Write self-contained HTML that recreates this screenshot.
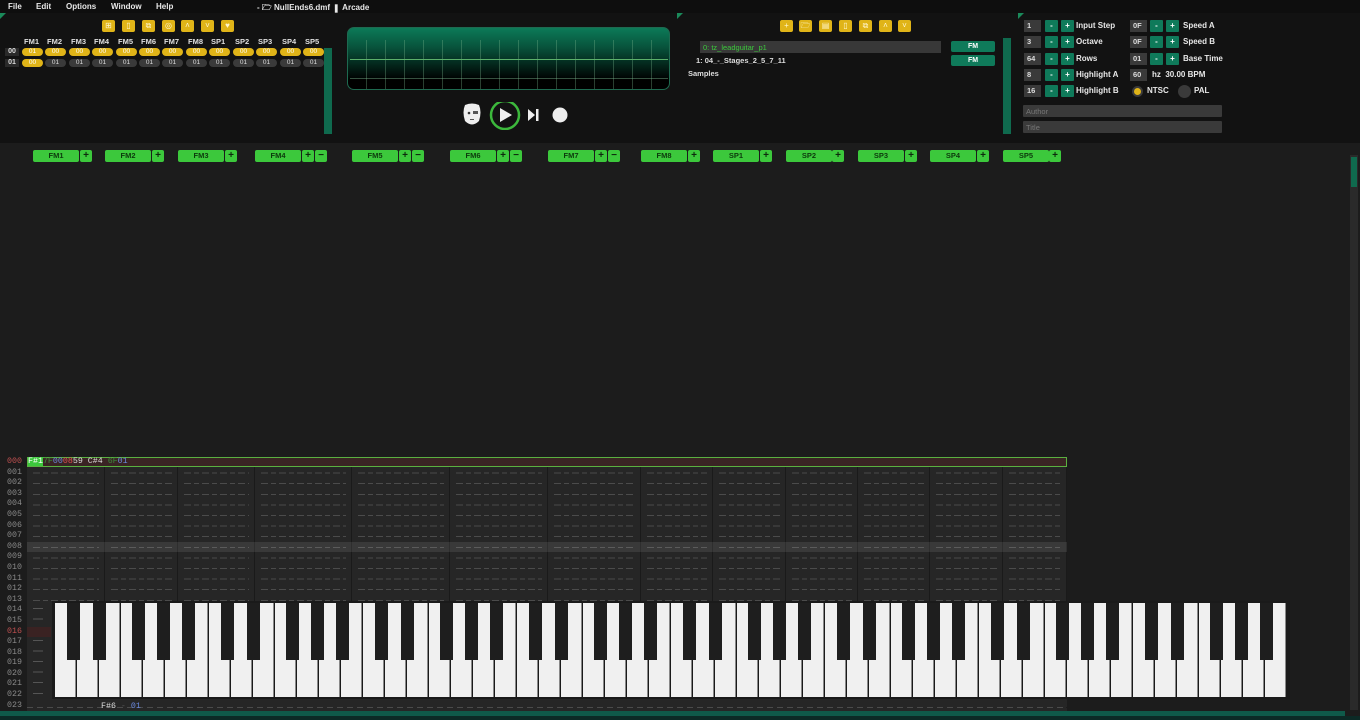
<!DOCTYPE html>
<html><head><meta charset="utf-8"><style>
*{margin:0;padding:0;box-sizing:border-box}
body{width:1360px;height:720px;overflow:hidden;background:#1c1c1c;font-family:"Liberation Sans",sans-serif;color:#ddd;position:relative}
.a{position:absolute}
.menu{left:0;top:0;width:1360px;height:13px;background:#0e0e0e;font-size:8px;font-weight:bold;color:#e8e8e8}
.menu span{position:absolute;top:2px}
.top{left:0;top:13px;width:1360px;height:130px;background:#121212}
.yb{position:absolute;width:13px;height:12px;background:#e0b418;border-radius:2px;color:#fff6cc;font-size:8px;text-align:center;line-height:12px}
.hd{position:absolute;top:37px;font-size:7.5px;font-weight:bold;color:#e0e0e0}
.pill{position:absolute;width:21px;height:8px;border-radius:4px;font-size:6.5px;text-align:center;line-height:8px}
.py{background:#e0b418;color:#fff}
.pg{background:#3a3a3a;color:#ddd}
.rl{position:absolute;font-size:7px;font-weight:bold;color:#ddd;background:#2a2a2a;width:14px;height:8px;line-height:8px;text-align:center}
.vb{position:absolute;width:17px;height:12px;background:#3a3a3a;font-size:7.5px;font-weight:bold;color:#ddd;line-height:12px;padding-left:3px}
.tb{position:absolute;width:13px;height:12px;background:#0f7a5a;font-size:8px;font-weight:bold;color:#fff;text-align:center;line-height:11px;border-radius:1px}
.lb{position:absolute;font-size:8px;font-weight:bold;color:#e8e8e8}
.ch{position:absolute;top:150px;height:12px;background:#3cc83c;border-radius:2px;font-size:7.5px;font-weight:bold;color:#0d3a0d;text-align:center;line-height:12px}
.pm{position:absolute;top:150px;width:12px;height:12px;background:#3cc83c;border-radius:2px;font-size:10px;font-weight:bold;color:#0d2a0d;text-align:center;line-height:11px}
.col{position:absolute;top:457px;height:146px;background:#262626;border-right:1px solid #1a1a1a}
.rn{left:7px;top:457px;font-family:"Liberation Mono",monospace;font-size:8.3px;line-height:10.6px;color:#8a8a8a;white-space:pre}
.mono{font-family:"Liberation Mono",monospace;font-size:8.3px}
</style></head><body>
<div class="a menu"><span style="left:8px">File</span><span style="left:36px">Edit</span><span style="left:66px">Options</span><span style="left:111px">Window</span><span style="left:156px">Help</span><span style="left:257px">- 🗁 NullEnds6.dmf ▮ Arcade</span></div>
<div class="a top"></div>
<div class="a" style="left:0;top:13px;width:0;height:0;border-top:6px solid #1a8a5a;border-right:6px solid transparent"></div>
<div class="a" style="left:677px;top:13px;width:0;height:0;border-top:6px solid #1a8a5a;border-right:6px solid transparent"></div>
<div class="a" style="left:1018px;top:13px;width:0;height:0;border-top:6px solid #1a8a5a;border-right:6px solid transparent"></div>

<div class="yb" style="left:102px;top:20px">⊞</div><div class="yb" style="left:122px;top:20px">▯</div><div class="yb" style="left:142px;top:20px">⧉</div><div class="yb" style="left:162px;top:20px">◎</div><div class="yb" style="left:181px;top:20px">˄</div><div class="yb" style="left:201px;top:20px">˅</div><div class="yb" style="left:221px;top:20px">♥</div>
<div class="hd" style="left:24px">FM1</div><div class="hd" style="left:47px">FM2</div><div class="hd" style="left:71px">FM3</div><div class="hd" style="left:94px">FM4</div><div class="hd" style="left:118px">FM5</div><div class="hd" style="left:141px">FM6</div><div class="hd" style="left:164px">FM7</div><div class="hd" style="left:188px">FM8</div><div class="hd" style="left:211px">SP1</div><div class="hd" style="left:235px">SP2</div><div class="hd" style="left:258px">SP3</div><div class="hd" style="left:282px">SP4</div><div class="hd" style="left:305px">SP5</div>
<div class="rl" style="left:5px;top:48px">00</div><div class="rl" style="left:5px;top:59px">01</div>
<div class="pill py" style="left:22px;top:48px">01</div><div class="pill py" style="left:45px;top:48px">00</div><div class="pill py" style="left:69px;top:48px">00</div><div class="pill py" style="left:92px;top:48px">00</div><div class="pill py" style="left:116px;top:48px">00</div><div class="pill py" style="left:139px;top:48px">00</div><div class="pill py" style="left:162px;top:48px">00</div><div class="pill py" style="left:186px;top:48px">00</div><div class="pill py" style="left:209px;top:48px">00</div><div class="pill py" style="left:233px;top:48px">00</div><div class="pill py" style="left:256px;top:48px">00</div><div class="pill py" style="left:280px;top:48px">00</div><div class="pill py" style="left:303px;top:48px">00</div>
<div class="pill py" style="left:22px;top:59px">00</div><div class="pill pg" style="left:45px;top:59px">01</div><div class="pill pg" style="left:69px;top:59px">01</div><div class="pill pg" style="left:92px;top:59px">01</div><div class="pill pg" style="left:116px;top:59px">01</div><div class="pill pg" style="left:139px;top:59px">01</div><div class="pill pg" style="left:162px;top:59px">01</div><div class="pill pg" style="left:186px;top:59px">01</div><div class="pill pg" style="left:209px;top:59px">01</div><div class="pill pg" style="left:233px;top:59px">01</div><div class="pill pg" style="left:256px;top:59px">01</div><div class="pill pg" style="left:280px;top:59px">01</div><div class="pill pg" style="left:303px;top:59px">01</div>
<div class="a" style="left:324px;top:48px;width:8px;height:86px;background:#0f6a4e"></div>

<div class="a" style="left:347px;top:27px;width:323px;height:63px;border-radius:7px;border:1px solid #1e6a50;background:linear-gradient(#0c7a58 0%,#08553d 30%,#000 85%);overflow:hidden">
<div class="a" style="left:0;top:12px;width:100%;height:100%;background:repeating-linear-gradient(to right,transparent 0 18px,rgba(120,180,140,.35) 18px 19px)"></div>
<div class="a" style="left:2px;top:31px;width:318px;height:1px;background:#5ab06a"></div>
<div class="a" style="left:2px;top:50px;width:318px;height:1px;background:rgba(120,180,140,.45)"></div>
</div>
<svg class="a" style="left:461px;top:102px" width="110" height="28">
<path d="M4 3 Q11 0 18 3 Q21 10 18 19 Q11 26 4 19 Q1 10 4 3Z" fill="#eee"/><rect x="12" y="9" width="5" height="3" fill="#555"/><circle cx="8" cy="11" r="1.3" fill="#333"/><rect x="9" y="17" width="4" height="1" fill="#555"/>
<circle cx="44" cy="13" r="14" fill="none" stroke="#3cb83c" stroke-width="2.5"/><path d="M39 6 L51 13 L39 20Z" fill="#eee"/>
<path d="M67 7 L74 13 L67 19Z" fill="#eee"/><rect x="75" y="7" width="2.5" height="12" fill="#eee"/>
<circle cx="99" cy="13" r="7.5" fill="#eee"/></svg>

<div class="yb" style="left:780px;top:20px">+</div><div class="yb" style="left:799px;top:20px">🗁</div><div class="yb" style="left:819px;top:20px">▤</div><div class="yb" style="left:839px;top:20px">▯</div><div class="yb" style="left:859px;top:20px">⧉</div><div class="yb" style="left:879px;top:20px">˄</div><div class="yb" style="left:898px;top:20px">˅</div>
<div class="a" style="left:700px;top:41px;width:241px;height:12px;background:#383838;font-size:7.5px;color:#3cc83c;padding:2px 0 0 3px">0: tz_leadguitar_p1</div>
<div class="a" style="left:696px;top:56px;font-size:7.5px;font-weight:bold;color:#ddd">1: 04_-_Stages_2_5_7_11</div>
<div class="a" style="left:688px;top:69px;font-size:7.5px;font-weight:bold;color:#ddd">Samples</div>
<div class="tb" style="left:951px;top:41px;width:44px;height:11px;font-size:7px;border-radius:2px">FM</div>
<div class="tb" style="left:951px;top:55px;width:44px;height:11px;font-size:7px;border-radius:2px">FM</div>
<div class="a" style="left:1003px;top:38px;width:8px;height:96px;background:#0f6a4e"></div>

<div class="vb" style="left:1024px;top:20px">1</div><div class="tb" style="left:1045px;top:20px">-</div><div class="tb" style="left:1061px;top:20px">+</div><div class="lb" style="left:1076px;top:21px">Input Step</div>
<div class="vb" style="left:1024px;top:36px">3</div><div class="tb" style="left:1045px;top:36px">-</div><div class="tb" style="left:1061px;top:36px">+</div><div class="lb" style="left:1076px;top:37px">Octave</div>
<div class="vb" style="left:1024px;top:53px">64</div><div class="tb" style="left:1045px;top:53px">-</div><div class="tb" style="left:1061px;top:53px">+</div><div class="lb" style="left:1076px;top:54px">Rows</div>
<div class="vb" style="left:1024px;top:69px">8</div><div class="tb" style="left:1045px;top:69px">-</div><div class="tb" style="left:1061px;top:69px">+</div><div class="lb" style="left:1076px;top:70px">Highlight A</div>
<div class="vb" style="left:1024px;top:85px">16</div><div class="tb" style="left:1045px;top:85px">-</div><div class="tb" style="left:1061px;top:85px">+</div><div class="lb" style="left:1076px;top:86px">Highlight B</div>
<div class="vb" style="left:1130px;top:20px">0F</div><div class="tb" style="left:1150px;top:20px">-</div><div class="tb" style="left:1166px;top:20px">+</div><div class="lb" style="left:1183px;top:21px">Speed A</div>
<div class="vb" style="left:1130px;top:36px">0F</div><div class="tb" style="left:1150px;top:36px">-</div><div class="tb" style="left:1166px;top:36px">+</div><div class="lb" style="left:1183px;top:37px">Speed B</div>
<div class="vb" style="left:1130px;top:53px">01</div><div class="tb" style="left:1150px;top:53px">-</div><div class="tb" style="left:1166px;top:53px">+</div><div class="lb" style="left:1183px;top:54px">Base Time</div>
<div class="vb" style="left:1130px;top:69px">60</div><div class="lb" style="left:1152px;top:70px">hz &nbsp;30.00 BPM</div>
<div class="a" style="left:1132px;top:86px;width:11px;height:11px;border-radius:50%;background:#e0b418;border:2px solid #3a3a3a"></div><div class="lb" style="left:1147px;top:86px">NTSC</div>
<div class="a" style="left:1178px;top:85px;width:13px;height:13px;border-radius:50%;background:#3a3a3a"></div><div class="lb" style="left:1194px;top:86px">PAL</div>
<div class="a" style="left:1023px;top:105px;width:199px;height:12px;background:#3a3a3a;border-radius:1px;font-size:7.5px;color:#777;padding:2px 3px">Author</div>
<div class="a" style="left:1023px;top:121px;width:199px;height:12px;background:#3a3a3a;border-radius:1px;font-size:7.5px;color:#777;padding:2px 3px">Title</div>

<div class="ch" style="left:33px;width:46px">FM1</div><div class="pm" style="left:80px">+</div>
<div class="ch" style="left:105px;width:46px">FM2</div><div class="pm" style="left:152px">+</div>
<div class="ch" style="left:178px;width:46px">FM3</div><div class="pm" style="left:225px">+</div>
<div class="ch" style="left:255px;width:46px">FM4</div><div class="pm" style="left:302px">+</div><div class="pm" style="left:315px">−</div>
<div class="ch" style="left:352px;width:46px">FM5</div><div class="pm" style="left:399px">+</div><div class="pm" style="left:412px">−</div>
<div class="ch" style="left:450px;width:46px">FM6</div><div class="pm" style="left:497px">+</div><div class="pm" style="left:510px">−</div>
<div class="ch" style="left:548px;width:46px">FM7</div><div class="pm" style="left:595px">+</div><div class="pm" style="left:608px">−</div>
<div class="ch" style="left:641px;width:46px">FM8</div><div class="pm" style="left:688px">+</div>
<div class="ch" style="left:713px;width:46px">SP1</div><div class="pm" style="left:760px">+</div>
<div class="ch" style="left:786px;width:46px">SP2</div><div class="pm" style="left:832px">+</div>
<div class="ch" style="left:858px;width:46px">SP3</div><div class="pm" style="left:905px">+</div>
<div class="ch" style="left:930px;width:46px">SP4</div><div class="pm" style="left:977px">+</div>
<div class="ch" style="left:1003px;width:46px">SP5</div><div class="pm" style="left:1049px">+</div>

<div class="a" style="left:27px;top:457px;width:1040px;height:256px;background:#262626"></div>
<div id="cols"></div>
<div class="a" style="left:27px;top:542px;width:1040px;height:10px;background:rgba(255,255,255,.09)"></div>
<div class="a" style="left:27px;top:457px;width:1040px;height:10px;background:#3a2424;border:1px solid #5ab040"></div>
<div class="a" style="left:27px;top:627px;width:24px;height:10px;background:#3a2222"></div>
<div class="a mono" style="left:28px;top:457px;line-height:10px;white-space:pre"><span style="background:#3cc83c;color:#fff">F#1</span><span style="color:#3a8a3a">7F</span><span style="color:#6a8ae0">00</span><span style="color:#e05050">08</span><span style="color:#ddd">59 C#4 </span><span style="color:#3a8a3a">6F</span><span style="color:#6a8ae0">01</span></div>
<div class="a rn"><span style="color:#c05050">000</span>
001
002
003
004
005
006
007
008
009
010
011
012
013
014
015
<span style="color:#c05050">016</span>
017
018
019
020
021
022
023</div>
<div class="a mono" style="left:101px;top:702px;color:#ddd">F#6 <span style="color:#555">-</span> <span style="color:#6a8ae0">01</span></div>

<div class="a" style="left:52px;top:601px;width:1238px;height:98px;background:#1a1a1a"></div>
<div id="piano"></div>

<div class="a" style="left:1350px;top:155px;width:8px;height:555px;background:#2a2a2a"></div>
<div class="a" style="left:1351px;top:157px;width:6px;height:30px;background:#0f6a4e"></div>
<div class="a" style="left:0;top:711px;width:1345px;height:5px;background:#0f5a4a"></div>
<div class="a" style="left:0;top:716px;width:1360px;height:4px;background:#0c2a26"></div>

<script>
var cs=[[27,105],[105,178],[178,255],[255,352],[352,450],[450,548],[548,641],[641,713],[713,786],[786,858],[858,930],[930,1003],[1003,1067]];
var h='';
cs.forEach(function(c){h+='<div class="col" style="left:'+c[0]+'px;width:'+(c[1]-c[0])+'px;background:repeating-linear-gradient(to right,#555 0 7px,transparent 7px 10px,#555 10px 15px,transparent 15px 18px);-webkit-mask:repeating-linear-gradient(to bottom,transparent 0 5px,#000 5px 6px,transparent 6px 10.6px);opacity:.8;background-position:6px 0;background-size:'+(c[1]-c[0]-12)+'px 100%;background-repeat:no-repeat"></div>';
h+='<div class="a" style="left:'+(c[1]-1)+'px;top:457px;width:1px;height:146px;background:#1a1a1a"></div>';});
h+='<div class="col" style="left:27px;width:1040px;top:703px;height:10px;background:repeating-linear-gradient(to right,#555 0 6px,transparent 6px 10px);-webkit-mask:linear-gradient(transparent 4px,#000 4px 5px,transparent 5px);opacity:.8"></div>';
h+='<div class="col" style="left:27px;width:24px;top:603px;height:100px;background:repeating-linear-gradient(to bottom,transparent 0 5px,#555 5px 6px,transparent 6px 10.6px);-webkit-mask:linear-gradient(to right,transparent 6px,#000 6px 16px,transparent 16px)"></div>';
document.getElementById('cols').innerHTML=h;
var p='',x0=55,w=22;
for(var i=0;i<56;i++)p+='<div class="a" style="left:'+(x0+i*w)+'px;top:603px;width:'+(w-1)+'px;height:94px;background:#f0f0f0;border-right:1px solid #888"></div>';
var off={0:-10,1:-6,3:-11,4:-8,5:-5};
for(var i=0;i<55;i++){var n=i%7;if(!(n in off))continue;p+='<div class="a" style="left:'+(x0+(i+1)*w+off[n])+'px;top:603px;width:13px;height:57px;background:#1e1e1e"></div>';}
document.getElementById('piano').innerHTML=p;
</script>
</body></html>
